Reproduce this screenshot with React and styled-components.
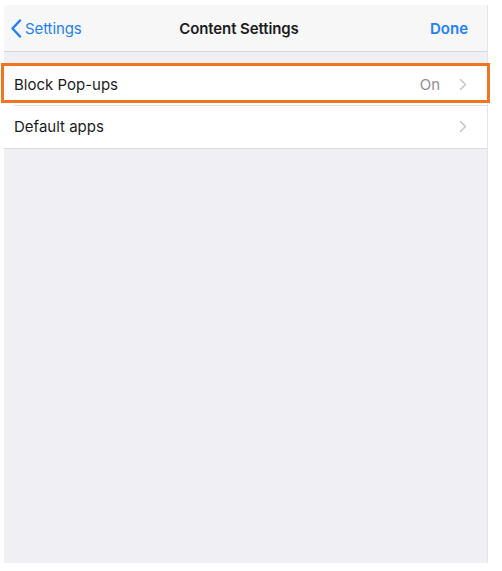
import React from "react"
import styled, { createGlobalStyle } from 'styled-components'

const GlobalStyle = createGlobalStyle`
  body {
    margin: 0;
    background: #ffffff;
    font-family: Inter, "Noto Sans", sans-serif;
    -webkit-font-smoothing: antialiased;
  }
`

const rows = [
  { label: 'Block Pop-ups', value: 'On', highlighted: true },
  { label: 'Default apps' },
]

const Chevron = ({ color = '#c7c7cc', width = 8, height = 13, stroke = 1.6 }) => (
  <svg width={width} height={height} viewBox="0 0 8 13" fill="none">
    <polyline points="1.5,1.5 6.5,6.5 1.5,11.5" stroke={color} strokeWidth={stroke} strokeLinecap="round" strokeLinejoin="round" />
  </svg>
)

const BackChevron = () => (
  <svg width="12" height="19" viewBox="0 0 12 19" fill="none">
    <polyline points="10,1.5 2.5,9.5 10,17.5" stroke="#1f7ff5" strokeWidth="2.4" strokeLinecap="round" strokeLinejoin="round" />
  </svg>
)

const App = () => {
  return (
    <>
      <GlobalStyle />
      <Screen>
        <NavBar>
          <BackButton>
            <BackChevron />
            <span>Settings</span>
          </BackButton>
          <Title>Content Settings</Title>
          <DoneButton>Done</DoneButton>
        </NavBar>
        <Group>
          {rows.map((row) => (
            <Row key={row.label}>
              <Label>{row.label}</Label>
              <Accessory>
                {row.value && <Value>{row.value}</Value>}
                <Chevron />
              </Accessory>
              {row.highlighted && <Highlight />}
            </Row>
          ))}
        </Group>
      </Screen>
    </>
  )
}

export default App

const Screen = styled.div`
  margin: 5px 0 0 4px;
  width: 483px;
  height: 558px;
  background: #efeff4;
  border-right: 1px solid #e4e4e8;
  display: flex;
  flex-direction: column;
`

const NavBar = styled.div`
  height: 46px;
  background: #f7f7f8;
  border-bottom: 1px solid #d6d6da;
  display: grid;
  grid-template-columns: 1fr auto 1fr;
  align-items: center;
  padding: 0 19px 0 6px;
`

const BackButton = styled.div`
  display: flex;
  align-items: center;
  gap: 3px;
  color: #1f7ff5;
  font-size: 15px;
  letter-spacing: -0.1px;
`

const Title = styled.div`
  font-size: 15px;
  font-weight: 600;
  color: #1c1c1e;
  letter-spacing: -0.1px;
`

const DoneButton = styled.div`
  justify-self: end;
  color: #1f7ff5;
  font-size: 15px;
  font-weight: 600;
`

const Group = styled.div`
  margin-top: 11px;
  background: #ffffff;
  border-bottom: 1px solid #dcdce0;
`

const Row = styled.div`
  position: relative;
  height: 42px;
  display: flex;
  align-items: center;
  justify-content: space-between;
  padding: 0 20px 0 10px;
  & + & {
    height: 43px;
  }
  & + &::before {
    content: '';
    position: absolute;
    top: 0;
    left: 10px;
    right: 0;
    border-top: 1px solid #e2e2e6;
  }
`

const Label = styled.div`
  font-size: 15px;
  color: #1c1c1e;
`

const Accessory = styled.div`
  display: flex;
  align-items: center;
  gap: 19px;
`

const Value = styled.div`
  font-size: 15px;
  color: #8e8e93;
`

const Highlight = styled.div`
  position: absolute;
  top: 0;
  bottom: 2px;
  left: -3px;
  right: -3px;
  border: 3px solid #ef7520;
  pointer-events: none;
`
